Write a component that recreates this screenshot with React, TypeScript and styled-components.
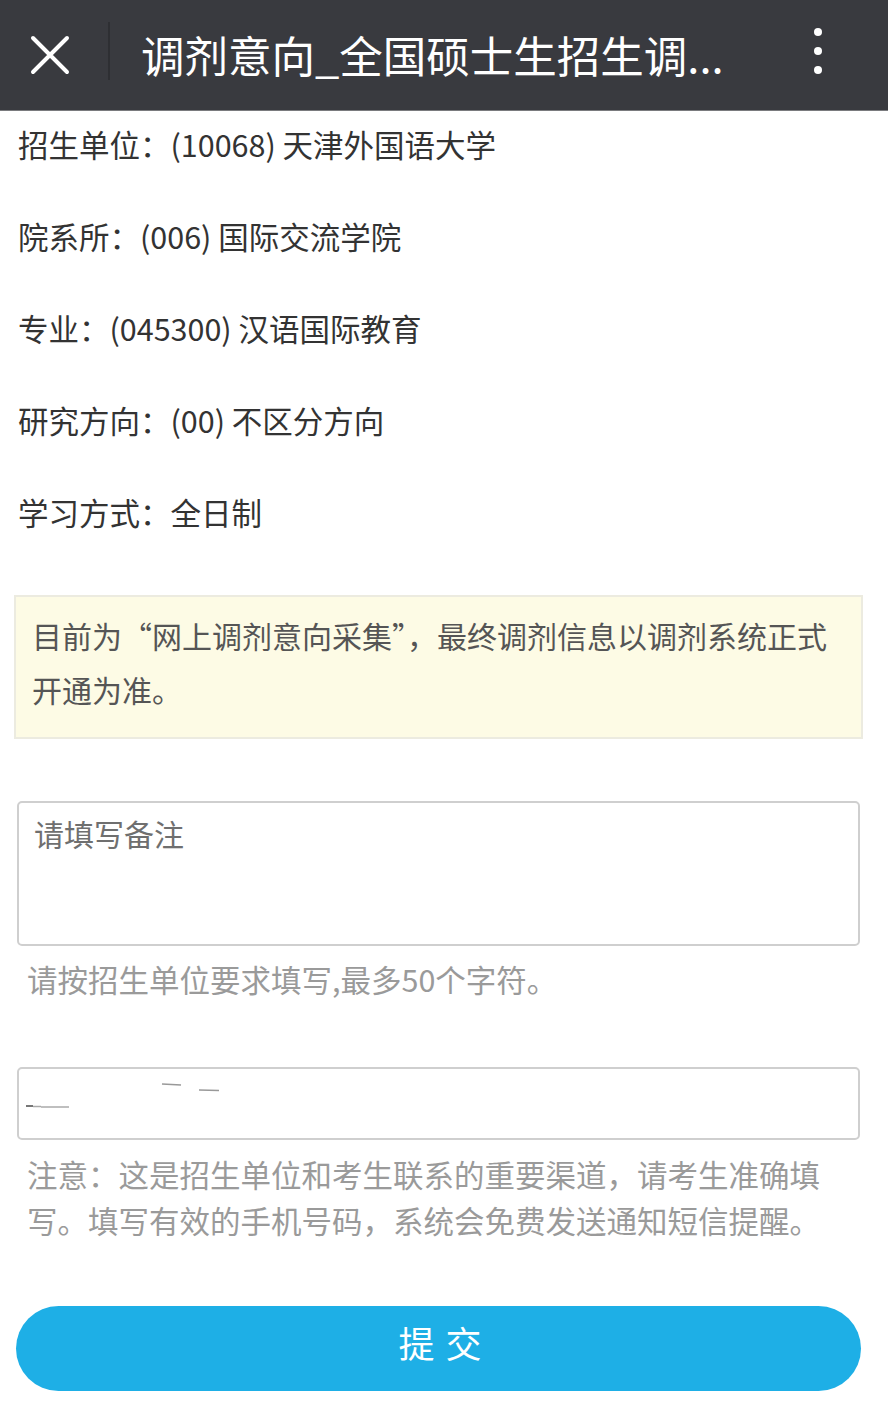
import React from "react";
import styled, { createGlobalStyle } from "styled-components";

const Global = createGlobalStyle`
  html, body { margin: 0; padding: 0; background: #ffffff; }
  body { font-family: "Noto Sans CJK SC", "Noto Sans", sans-serif; }
  * { box-sizing: border-box; }
`;

const Page = styled.div`
  width: 888px;
  min-height: 1420px;
  background: #fff;
  display: flex;
  flex-direction: column;
`;

const TopBar = styled.header`
  height: 111px;
  background: #393a3f;
  border-bottom: 1px solid #7a7b7e;
  display: flex;
  align-items: center;
  padding: 0 0 0 28px;
`;

const IconButton = styled.div`
  width: 44px;
  height: 44px;
  display: flex;
  align-items: center;
  justify-content: center;
`;

const Divider = styled.div`
  width: 2px;
  height: 58px;
  background: #2e2f33;
  margin: -8px 31px 0 36px;
`;

const Title = styled.h1`
  flex: 1;
  margin: 0;
  color: #ffffff;
  font-size: 43.5px;
  font-weight: 400;
  line-height: 64px;
  white-space: nowrap;
`;

const Menu = styled.div`
  width: 60px;
  margin-right: 40px;
  display: flex;
  flex-direction: column;
  align-items: center;
  gap: 11px;
  margin-top: -8px;
`;

const Dot = styled.span`
  width: 8px;
  height: 8px;
  border-radius: 50%;
  background: #ffffff;
`;

const InfoList = styled.div`
  display: flex;
  flex-direction: column;
  gap: 48px;
  padding: 11px 18px 0;
`;

const InfoRow = styled.div`
  font-size: 30.5px;
  line-height: 44px;
  color: #333333;
`;

const Notice = styled.div`
  margin: 61px 25px 0 14px;
  background: #fdfbe5;
  border: 2px solid #ecebe0;
  padding: 11px 16px 21px;
  font-size: 30px;
  line-height: 54px;
  color: #555555;
`;

const Field = styled.div<{ $height: number }>`
  margin: ${(p) => (p.$height > 100 ? 62 : 68)}px 28px 0 17px;
  height: ${(p) => p.$height}px;
  border: 2px solid #cfcfcf;
  border-radius: 5px;
  background: #fff;
  padding: 9px 15px;
  position: relative;
`;

const Placeholder = styled.div`
  font-size: 30px;
  line-height: 42px;
  color: #6f6f6f;
`;

const Hint = styled.div<{ $lh: number; $mt: number }>`
  margin: ${(p) => p.$mt}px 40px 0 27px;
  font-size: 30.5px;
  line-height: ${(p) => p.$lh}px;
  color: #9a9a9a;
`;

const Scribble = styled.svg`
  position: absolute;
  left: 0;
  top: 0;
`;

const SubmitButton = styled.button`
  margin: 63px 27px 0 16px;
  height: 85px;
  border: none;
  border-radius: 43px;
  background: #1eafe6;
  color: #ffffff;
  font-family: "Noto Sans CJK SC", "Noto Sans", sans-serif;
  font-size: 36px;
  line-height: 48px;
  letter-spacing: 11px;
  padding: 0 0 14px 14px;
`;

const rows = [
  "招生单位：(10068) 天津外国语大学",
  "院系所：(006) 国际交流学院",
  "专业：(045300) 汉语国际教育",
  "研究方向：(00) 不区分方向",
  "学习方式：全日制",
];

export default function App() {
  return (
    <Page>
      <Global />
      <TopBar>
        <IconButton>
          <svg width="40" height="40" viewBox="0 0 40 40">
            <path d="M3 3 L37 37 M37 3 L3 37" stroke="#ffffff" strokeWidth="4" strokeLinecap="round" />
          </svg>
        </IconButton>
        <Divider />
        <Title>调剂意向_全国硕士生招生调...</Title>
        <Menu>
          <Dot />
          <Dot />
          <Dot />
        </Menu>
      </TopBar>

      <InfoList>
        {rows.map((r) => (
          <InfoRow key={r}>{r}</InfoRow>
        ))}
      </InfoList>

      <Notice>目前为“网上调剂意向采集”，最终调剂信息以调剂系统正式开通为准。</Notice>

      <Field $height={145}>
        <Placeholder>请填写备注</Placeholder>
      </Field>
      <Hint $lh={40} $mt={13}>请按招生单位要求填写,最多50个字符。</Hint>

      <Field $height={73}>
        <Scribble width="240" height="60" viewBox="0 0 240 60">
          <path d="M7 37 L14 37" stroke="#777" strokeWidth="2" />
          <path d="M14 37.5 L22 37.5 M22 38 L50 38" stroke="#aaa" strokeWidth="1.5" />
          <path d="M143 15 L162 16" stroke="#999" strokeWidth="1.5" />
          <path d="M180 21 L200 21.5" stroke="#999" strokeWidth="1.5" />
        </Scribble>
      </Field>
      <Hint $lh={46} $mt={11}>注意：这是招生单位和考生联系的重要渠道，请考生准确填写。填写有效的手机号码，系统会免费发送通知短信提醒。</Hint>

      <SubmitButton>提交</SubmitButton>
    </Page>
  );
}
